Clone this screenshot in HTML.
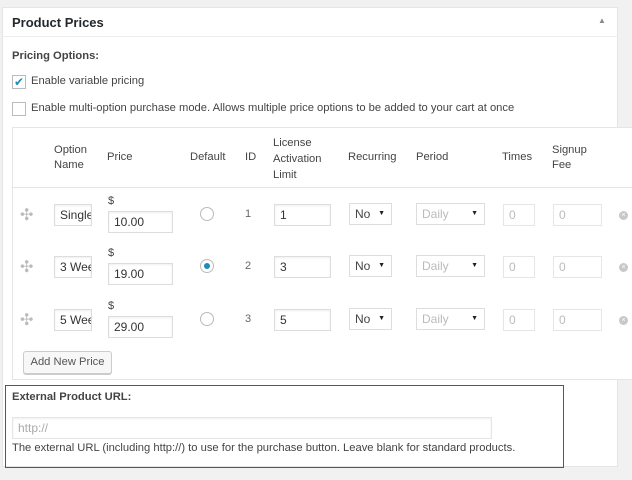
<!DOCTYPE html>
<html><head><style>
*{box-sizing:border-box}
body{margin:0;width:632px;height:480px;background:#f1f1f1;font-family:"Liberation Sans",sans-serif;font-size:11.2px;color:#444;position:relative;overflow:hidden}
.a{position:absolute}
.inp{position:absolute;background:#fff;border:1px solid #ddd;box-shadow:inset 0 1px 2px rgba(0,0,0,.07);padding:0 0 0 5px;line-height:20px;font-size:12px;color:#333;overflow:hidden;white-space:nowrap}
.dis{background:#fff;color:#bbb;border-color:#e6e6e6;box-shadow:none}
.sel{position:absolute;background:#fff;border:1px solid #ddd;height:22px;line-height:20px;padding-left:5px;font-size:12px}
.sel:after{content:"▼";position:absolute;right:6px;top:0;font-size:7px;color:#222}
.radio{position:absolute;width:14px;height:14px;border:1px solid #bbb;border-radius:50%;background:#fff}
.mv{position:absolute;font-size:16px;color:#bbb}
.x{position:absolute;width:9px;height:9px;border-radius:50%;background:#c8c8c8;color:#fff;font-size:7px;line-height:9px;text-align:center}
</style></head><body>
<div class="a" style="left:2px;top:7px;width:616px;height:460px;background:#fff;border:1px solid #e5e5e5"></div>
<div class="a" style="left:2px;top:36px;width:616px;height:1px;background:#eee"></div>
<div class="a" style="left:12px;top:15px;font-size:13px;font-weight:bold;color:#23282d">Product Prices</div>
<div class="a" style="left:598px;top:16px;font-size:8px;color:#888">▲</div>
<div class="a" style="left:12px;top:50px;font-weight:bold;color:#444">Pricing Options:</div>
<div class="a" style="left:12px;top:75px;width:14px;height:14px;border:1px solid #bbb;background:#fff;color:#1e8cbe;font-size:12px;line-height:12px;text-align:center">✔</div>
<div class="a" style="left:31px;top:75px">Enable variable pricing</div>
<div class="a" style="left:12px;top:102px;width:14px;height:14px;border:1px solid #bbb;background:#fff"></div>
<div class="a" style="left:31px;top:102px">Enable multi-option purchase mode. Allows multiple price options to be added to your cart at once</div>
<div class="a" style="left:12px;top:127px;width:630px;height:253px;border:1px solid #e5e5e5;background:#fff"></div>
<div class="a" style="left:13px;top:187px;width:620px;height:1px;background:#e5e5e5"></div>
<div class="a" style="left:54px;top:143px;line-height:15px">Option<br>Name</div>
<div class="a" style="left:107px;top:151px">Price</div>
<div class="a" style="left:190px;top:151px">Default</div>
<div class="a" style="left:245px;top:151px">ID</div>
<div class="a" style="left:273px;top:135px;line-height:16px">License<br>Activation<br>Limit</div>
<div class="a" style="left:348px;top:151px">Recurring</div>
<div class="a" style="left:416px;top:151px">Period</div>
<div class="a" style="left:502px;top:151px">Times</div>
<div class="a" style="left:552px;top:143px;line-height:15px">Signup<br>Fee</div>

<div class="mv" style="left:20px;top:205px">✣</div>
<div class="inp" style="left:54px;top:204px;width:38px;height:22px">Single</div>
<div class="a" style="left:108px;top:195px;font-size:11px">$</div>
<div class="inp" style="left:108px;top:211px;width:65px;height:22px">10.00</div>
<div class="radio" style="left:200px;top:207px"></div>
<div class="a" style="left:245px;top:208px;font-size:11px;color:#666">1</div>
<div class="inp" style="left:274px;top:204px;width:57px;height:22px">1</div>
<div class="sel" style="left:349px;top:203px;width:43px">No</div>
<div class="sel dis" style="left:416px;top:203px;width:69px">Daily</div>
<div class="inp dis" style="left:503px;top:204px;width:32px;height:22px">0</div>
<div class="inp dis" style="left:553px;top:204px;width:49px;height:22px">0</div>
<div class="x" style="left:619px;top:211px">×</div>

<div class="mv" style="left:20px;top:257px">✣</div>
<div class="inp" style="left:54px;top:256px;width:38px;height:22px">3 Weeks</div>
<div class="a" style="left:108px;top:247px;font-size:11px">$</div>
<div class="inp" style="left:108px;top:263px;width:65px;height:22px">19.00</div>
<div class="radio" style="left:200px;top:259px"><div class="a" style="left:3px;top:3px;width:6px;height:6px;border-radius:50%;background:#1e8cbe"></div></div>
<div class="a" style="left:245px;top:260px;font-size:11px;color:#666">2</div>
<div class="inp" style="left:274px;top:256px;width:57px;height:22px">3</div>
<div class="sel" style="left:349px;top:255px;width:43px">No</div>
<div class="sel dis" style="left:416px;top:255px;width:69px">Daily</div>
<div class="inp dis" style="left:503px;top:256px;width:32px;height:22px">0</div>
<div class="inp dis" style="left:553px;top:256px;width:49px;height:22px">0</div>
<div class="x" style="left:619px;top:263px">×</div>

<div class="mv" style="left:20px;top:310px">✣</div>
<div class="inp" style="left:54px;top:309px;width:38px;height:22px">5 Weeks</div>
<div class="a" style="left:108px;top:300px;font-size:11px">$</div>
<div class="inp" style="left:108px;top:316px;width:65px;height:22px">29.00</div>
<div class="radio" style="left:200px;top:312px"></div>
<div class="a" style="left:245px;top:313px;font-size:11px;color:#666">3</div>
<div class="inp" style="left:274px;top:309px;width:57px;height:22px">5</div>
<div class="sel" style="left:349px;top:308px;width:43px">No</div>
<div class="sel dis" style="left:416px;top:308px;width:69px">Daily</div>
<div class="inp dis" style="left:503px;top:309px;width:32px;height:22px">0</div>
<div class="inp dis" style="left:553px;top:309px;width:49px;height:22px">0</div>
<div class="x" style="left:619px;top:316px">×</div>

<div class="a" style="left:23px;top:351px;width:89px;height:23px;border:1px solid #ccc;background:#f7f7f7;border-radius:3px;line-height:21px;text-align:center;color:#555;box-shadow:0 1px 0 #ccc">Add New Price</div>

<div class="a" style="left:5px;top:385px;width:559px;height:83px;border:1px solid #9a3a3a"></div>
<div class="a" style="left:12px;top:391px;font-weight:bold;color:#444">External Product URL:</div>
<div class="inp" style="left:12px;top:417px;width:480px;height:22px;color:#aaa;border-color:#e5e5e5">http://</div>
<div class="a" style="left:12px;top:442px">The external URL (including http://) to use for the purchase button. Leave blank for standard products.</div>
</body></html>
